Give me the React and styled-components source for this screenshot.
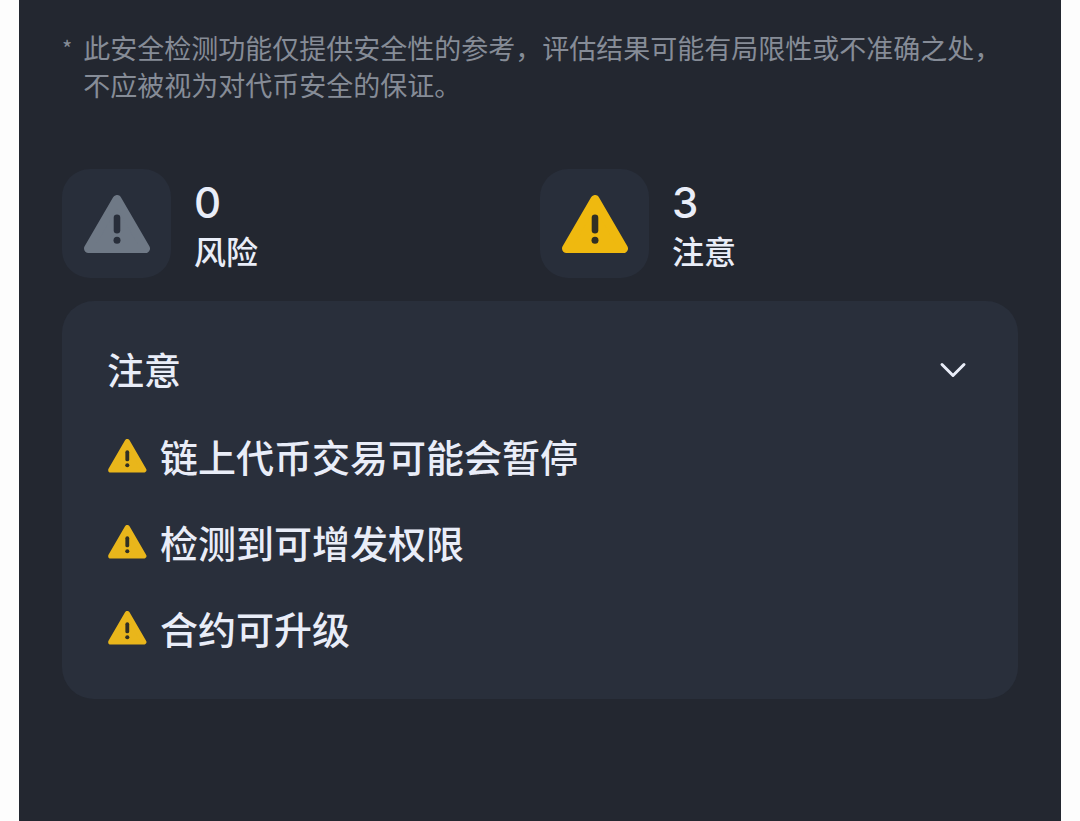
import React, { useState } from 'react';
import styled, { createGlobalStyle } from 'styled-components';

const GlobalStyle = createGlobalStyle`
  * {
    box-sizing: border-box;
  }

  body {
    margin: 0;
    background: #fdfdfd;
    font-family: Inter, "Noto Sans CJK SC", sans-serif;
  }
`;

const Page = styled.main`
  min-height: 100vh;
  margin: 0 19px;
  padding: 29px 43px 48px;
  background: #232730;
  color: #e9edf8;
`;

const Notice = styled.p`
  display: flex;
  gap: 11px;
  margin: 0;
  font-family: "Noto Sans CJK SC", sans-serif;
  font-size: 27px;
  line-height: 37px;
  color: #868c97;
`;

const Asterisk = styled.span`
  font-size: 22px;
`;

const Summary = styled.section`
  display: grid;
  grid-template-columns: 1fr 1fr;
  margin: 66px 0 23px;
`;

const Stat = styled.div`
  display: flex;
  align-items: center;
  gap: 23px;
`;

const IconTile = styled.div`
  display: flex;
  align-items: center;
  justify-content: center;
  width: 109px;
  height: 109px;
  border-radius: 28px;
  background: #282e3a;
`;

const StatText = styled.div`
  display: flex;
  flex-direction: column;
  padding-top: 6px;
`;

const StatValue = styled.strong`
  font-size: 42px;
  font-weight: 500;
  line-height: 52px;
`;

const StatLabel = styled.span`
  font-size: 32px;
  font-weight: 500;
  line-height: 48px;
`;

const Card = styled.section`
  padding: 44px 45px 42px;
  border-radius: 32px;
  background: #292f3b;
`;

const CardTitle = styled.h2`
  margin: 0;
  font-size: 37px;
  font-weight: 500;
`;

const CardToggle = styled.button`
  display: flex;
  align-items: center;
  justify-content: space-between;
  width: 100%;
  padding: 0;
  border: none;
  background: none;
  color: inherit;
  font: inherit;
  line-height: 54px;
  cursor: pointer;
`;

const Chevron = styled.svg`
  width: 40px;
  height: 40px;
  transform: ${props => (props.$open ? 'none' : 'rotate(-90deg)')};
`;

const WarningList = styled.ul`
  display: flex;
  flex-direction: column;
  gap: 32px;
  margin: 32px 0 0;
  padding: 0;
  list-style: none;
`;

const WarningItem = styled.li`
  display: flex;
  align-items: center;
  gap: 13px;
  font-size: 38px;
  font-weight: 500;
  line-height: 54px;
`;

const WarningSvg = styled.svg`
  flex: none;
  width: ${props => (props.$large ? '66px' : '40px')};
  height: auto;
`;

// The small icon keeps a little space below it, so it sits level with the text.
const WarningIcon = ({ color, mark, large }) => (
  <WarningSvg viewBox={large ? '0 0 66 58' : '-2 0 69 64'} $large={large} aria-hidden="true">
    <path
      d="M33 4.5L61.5 53.5H4.5Z"
      fill={color}
      stroke={color}
      strokeWidth="9"
      strokeLinejoin="round"
    />
    <rect x="29.7" y="19.5" width="6.6" height="19" rx="3.3" fill={mark} />
    <circle cx="33" cy="45.2" r="3.5" fill={mark} />
  </WarningSvg>
);

const stats = [
  { label: '风险', value: 0, color: '#6f7986', mark: '#282e3a' },
  { label: '注意', value: 3, color: '#efb90f', mark: '#302f24' }
];

const warnings = ['链上代币交易可能会暂停', '检测到可增发权限', '合约可升级'];

const App = () => {
  const [open, setOpen] = useState(true);

  return (
    <>
      <GlobalStyle />
      <Page>
        <Notice>
          <Asterisk>*</Asterisk>
          <span>
            此安全检测功能仅提供安全性的参考，评估结果可能有局限性或不准确之处，不应被视为对代币安全的保证。
          </span>
        </Notice>

        <Summary>
          {stats.map(stat => (
            <Stat key={stat.label}>
              <IconTile>
                <WarningIcon color={stat.color} mark={stat.mark} large />
              </IconTile>
              <StatText>
                <StatValue>{stat.value}</StatValue>
                <StatLabel>{stat.label}</StatLabel>
              </StatText>
            </Stat>
          ))}
        </Summary>

        <Card>
          <CardTitle>
            <CardToggle
              type="button"
              aria-expanded={open}
              onClick={() => setOpen(!open)}
            >
              注意
              <Chevron $open={open} viewBox="0 0 40 40" aria-hidden="true">
                <path
                  d="M9 12.5L20 23.5L31 12.5"
                  fill="none"
                  stroke="currentColor"
                  strokeWidth="3"
                  strokeLinecap="round"
                  strokeLinejoin="round"
                />
              </Chevron>
            </CardToggle>
          </CardTitle>

          {open && (
            <WarningList>
              {warnings.map(text => (
                <WarningItem key={text}>
                  <WarningIcon color="#e9b61b" mark="#302f24" />
                  {text}
                </WarningItem>
              ))}
            </WarningList>
          )}
        </Card>
      </Page>
    </>
  );
};

export default App;
